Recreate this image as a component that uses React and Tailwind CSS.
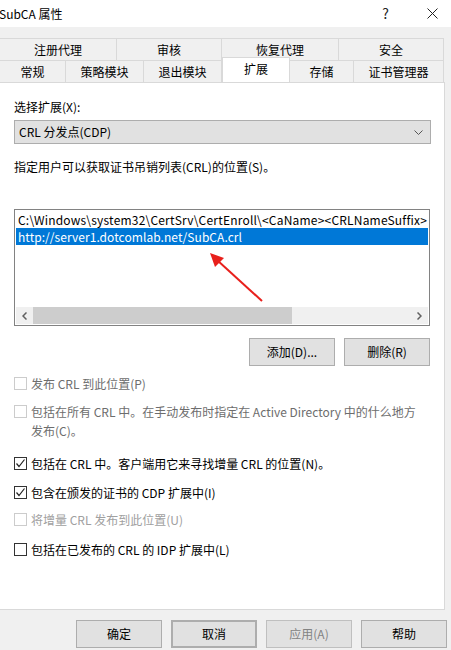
import React from "react";

const font = { fontFamily: '"Noto Sans CJK SC", "Noto Sans", sans-serif' };

const row1 = [
  { label: "注册代理", w: "w-[117px]" },
  { label: "审核", w: "w-[105px]" },
  { label: "恢复代理", w: "w-[117px]" },
  { label: "安全", w: "w-[105px]" },
];

const row2 = [
  { label: "常规", w: "w-[66px]" },
  { label: "策略模块", w: "w-[78px]" },
  { label: "退出模块", w: "w-[78px]" },
  { label: "扩展", w: "w-[68px]", active: true },
  { label: "存储", w: "w-[64px]" },
  { label: "证书管理器", w: "w-[90px]" },
];

const Check = ({ checked, disabled }) => (
  <span
    className={`mt-[3px] flex h-[13px] w-[13px] shrink-0 items-center justify-center border bg-white ${
      disabled ? "border-[#cccccc]" : "border-[#333333]"
    }`}
  >
    {checked && (
      <svg width="11" height="11" viewBox="0 0 11 11">
        <polyline points="1.5,5.5 4,8.5 9.5,1.5" fill="none" stroke="#222" strokeWidth="1.2" />
      </svg>
    )}
  </span>
);

const Option = ({ checked, disabled, tone, className, children }) => (
  <div className={`flex gap-[4px] ${className}`}>
    <Check checked={checked} disabled={disabled} />
    <span className={`leading-[19px] ${tone || "text-black"}`}>{children}</span>
  </div>
);

const Btn = ({ children, className = "" }) => (
  <button
    className={`flex h-[28px] w-[86px] items-center justify-center border border-[#adadad] bg-[#e1e1e1] text-[12px] ${className}`}
  >
    {children}
  </button>
);

export default function App() {
  return (
    <div className="flex h-[650px] w-[451px] flex-col bg-[#f0f0f0] text-[12px] text-black" style={font}>
      {/* title bar */}
      <div className="flex h-[27px] items-center bg-white">
        <span className="-ml-[1px] text-[12px]">SubCA 属性</span>
        <span className="ml-auto mr-[38px] text-[14px] text-[#222]">?</span>
        <svg width="11" height="11" viewBox="0 0 11 11" className="mr-[13px]">
          <path d="M0.5 0.5 L10.5 10.5 M10.5 0.5 L0.5 10.5" stroke="#222" strokeWidth="1" />
        </svg>
      </div>

      {/* tabs */}
      <div className="mt-[11px] flex h-[22px]">
        {row1.map((t) => (
          <div
            key={t.label}
            className={`${t.w} flex items-center justify-center border-r border-t border-[#d9d9d9] leading-none`}
          >
            {t.label}
          </div>
        ))}
      </div>
      <div className="flex h-[22px] w-[444px] items-end border-t border-[#d9d9d9]">
        {row2.map((t) =>
          t.active ? (
            <div
              key={t.label}
              className={`${t.w} relative z-10 -mt-[3px] flex h-[25px] items-start justify-center border-x border-t border-[#d9d9d9] bg-white pt-[5px] leading-none`}
            >
              {t.label}
            </div>
          ) : (
            <div
              key={t.label}
              className={`${t.w} flex h-[21px] items-center justify-center border-r border-[#d9d9d9] pt-[1px] leading-none`}
            >
              {t.label}
            </div>
          )
        )}
      </div>

      {/* panel */}
      <div className="flex h-[528px] w-[445px] flex-col border-r border-b border-t border-[#d9d9d9] bg-white pl-[14px]">
        <div className="mt-[16px] leading-[16px]">选择扩展(X):</div>
        <div className="mt-[5px] flex h-[24px] w-[417px] items-center border border-[#adadad] bg-[#e1e1e1] pl-[4px] pr-[7px]">
          <span>CRL 分发点(CDP)</span>
          <svg width="9" height="5" viewBox="0 0 9 5" className="ml-auto">
            <polyline points="0.5,0.5 4.5,4.5 8.5,0.5" fill="none" stroke="#555" strokeWidth="1" />
          </svg>
        </div>
        <div className="mt-[15px] leading-[16px]">指定用户可以获取证书吊销列表(CRL)的位置(S)。</div>

        {/* list */}
        <div className="relative mt-[34px] flex h-[117px] w-[416px] flex-col border border-[#828282] p-[1px]">
          <div className="h-[17px] whitespace-nowrap pl-[2px] leading-[17px] tracking-[0.2px]">
            C:\Windows\system32\CertSrv\CertEnroll\&lt;CaName&gt;&lt;CRLNameSuffix&gt;
          </div>
          <div className="h-[17px] whitespace-nowrap bg-[#0078d7] pl-[2px] leading-[17px] tracking-[0.05px] text-white">
            http://server1.dotcomlab.net/SubCA.crl
          </div>
          <div className="mt-auto flex h-[17px] items-center bg-[#f0f0f0]">
            <div className="flex w-[17px] justify-center">
              <svg width="5" height="8" viewBox="0 0 5 8">
                <polyline points="4.5,0.5 1,4 4.5,7.5" fill="none" stroke="#606060" strokeWidth="1.5" />
              </svg>
            </div>
            <div className="h-[17px] w-[259px] bg-[#cdcdcd]" />
            <div className="ml-auto flex w-[17px] justify-center">
              <svg width="5" height="8" viewBox="0 0 5 8">
                <polyline points="0.5,0.5 4,4 0.5,7.5" fill="none" stroke="#606060" strokeWidth="1.5" />
              </svg>
            </div>
          </div>
          {/* annotation arrow */}
          <svg className="absolute left-[180px] top-[36px]" width="70" height="70" viewBox="0 0 70 70">
            <line x1="67" y1="55" x2="22" y2="14" stroke="#e8201c" strokeWidth="2" />
            <polygon points="15,7 29,12 20,21" fill="#e8201c" />
          </svg>
        </div>

        <div className="mt-[12px] flex w-[416px] justify-end gap-[9px]">
          <Btn className="w-[85px]">添加(D)...</Btn>
          <Btn className="w-[86px]">删除(R)</Btn>
        </div>

        <Option disabled tone="text-[#6d6d6d]" className="mt-[8px]">
          发布 CRL 到此位置(P)
        </Option>
        <Option disabled tone="text-[#6d6d6d]" className="mt-[9px] w-[425px]">
          包括在所有 CRL 中。在手动发布时指定在 Active Directory 中的什么地方
          <br />
          发布(C)。
        </Option>
        <Option checked className="mt-[14px]">
          包括在 CRL 中。客户端用它来寻找增量 CRL 的位置(N)。
        </Option>
        <Option checked className="mt-[10px]">
          包含在颁发的证书的 CDP 扩展中(I)
        </Option>
        <Option disabled tone="text-[#a0a0a0]" className="mt-[8px]">
          将增量 CRL 发布到此位置(U)
        </Option>
        <Option className="mt-[11px]">包括在已发布的 CRL 的 IDP 扩展中(L)</Option>
      </div>

      {/* footer */}
      <div className="mt-[10px] flex justify-end gap-[9px] pr-[4px]">
        <Btn className="h-[27px]">确定</Btn>
        <Btn className="h-[27px] border-2 border-[#0078d7]">取消</Btn>
        <Btn className="h-[27px] border-[#bfbfbf] bg-[#cccccc] text-[#838383]">应用(A)</Btn>
        <Btn className="h-[27px]">帮助</Btn>
      </div>
    </div>
  );
}
